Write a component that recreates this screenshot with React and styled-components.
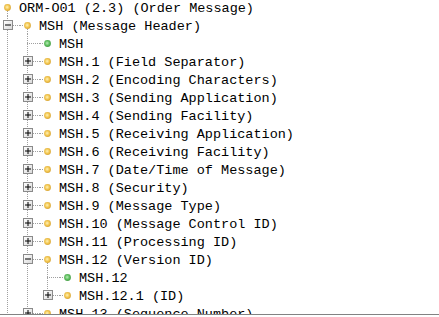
import React from 'react';
import styled, { createGlobalStyle } from 'styled-components';

const GlobalStyle = createGlobalStyle`
    html, body {
        margin: 0;
        padding: 0;
        background: #fff;
    }
`;

const DOT = '#a0a0a0';
const vLine = (h) =>
    `repeating-linear-gradient(to bottom, ${DOT} 0 1px, transparent 1px 2px) 7px 0 / 1px ${h} no-repeat`;
const hLine = (from, w) =>
    `repeating-linear-gradient(to right, ${DOT} 0 1px, transparent 1px 2px) ${from}px 9px / ${w}px 1px no-repeat`;

const Viewport = styled.div`
    width: 439px;
    height: 314px;
    overflow: hidden;
    border-bottom: 1px solid #828282;
    background: #fff;
`;

const TreeList = styled.div`
    margin-top: -2px;
    display: flex;
    flex-direction: column;
`;

const Row = styled.div`
    display: flex;
    height: 18px;
    white-space: nowrap;
`;

const GuideCell = styled.div`
    width: 20px;
    flex-shrink: 0;
    background: ${(p) => (p.$line ? vLine('100%') : 'none')};
`;

const ConnectorCell = styled.div`
    width: 20px;
    flex-shrink: 0;
    display: flex;
    align-items: flex-start;
    padding: 4px 0 0 3px;
    box-sizing: border-box;
    background: ${(p) => `${hLine(7, 13)}, ${vLine(p.$last ? '10px' : '100%')}`};
`;

const DotCell = styled.div`
    width: 19px;
    flex-shrink: 0;
    display: flex;
    align-items: flex-start;
    padding: 6px 0 0 4px;
    box-sizing: border-box;
    background: ${(p) => {
        const parts = [];
        if (p.$connected) parts.push(hLine(0, 4));
        if (p.$open) parts.push(`repeating-linear-gradient(to bottom, ${DOT} 0 1px, transparent 1px 2px) 7px 13px / 1px 5px no-repeat`);
        return parts.length ? parts.join(', ') : 'none';
    }};
`;

const Label = styled.span`
    margin-top: 2px;
    font-family: "Liberation Mono", "Courier New", monospace;
    font-size: 13.5px;
    line-height: 18px;
    color: #000;
`;

function ExpandBox({ open }) {
    return (
        <svg width="10" height="10" viewBox="0 0 10 10">
            <defs>
                <linearGradient id="boxfill" x1="0" y1="0" x2="1" y2="1">
                    <stop offset="0" stopColor="#ffffff" />
                    <stop offset="1" stopColor="#d8d8d8" />
                </linearGradient>
            </defs>
            <rect x="0.5" y="0.5" width="9" height="9" fill="url(#boxfill)" stroke="#8a8a8a" />
            <rect x="2" y="4.5" width="6" height="1" fill="#000" />
            {!open && <rect x="4.5" y="2" width="1" height="6" fill="#000" />}
        </svg>
    );
}

function Bullet({ kind }) {
    const yellow = kind !== 'value';
    const id = yellow ? 'dotY' : 'dotG';
    return (
        <svg width="7" height="7" viewBox="0 0 7 7">
            <defs>
                <radialGradient id={id} cx="0.45" cy="0.45" r="0.6">
                    <stop offset="0" stopColor={yellow ? '#fff2b8' : '#b8ecb8'} />
                    <stop offset="0.55" stopColor={yellow ? '#f2c650' : '#5fbf5f'} />
                    <stop offset="1" stopColor={yellow ? '#d4a030' : '#449a44'} />
                </radialGradient>
            </defs>
            <circle cx="3.5" cy="3.5" r="3.4" fill={`url(#${id})`} />
        </svg>
    );
}

const field = (label, extra = {}) => ({ label, children: [{ label: 'x' }], ...extra });

const tree = {
    label: 'ORM-O01 (2.3) (Order Message)',
    open: true,
    children: [
        {
            label: 'MSH (Message Header)',
            open: true,
            children: [
                { label: 'MSH', kind: 'value' },
                field('MSH.1 (Field Separator)'),
                field('MSH.2 (Encoding Characters)'),
                field('MSH.3 (Sending Application)'),
                field('MSH.4 (Sending Facility)'),
                field('MSH.5 (Receiving Application)'),
                field('MSH.6 (Receiving Facility)'),
                field('MSH.7 (Date/Time of Message)'),
                field('MSH.8 (Security)'),
                field('MSH.9 (Message Type)'),
                field('MSH.10 (Message Control ID)'),
                field('MSH.11 (Processing ID)'),
                {
                    label: 'MSH.12 (Version ID)',
                    open: true,
                    children: [
                        { label: 'MSH.12', kind: 'value' },
                        field('MSH.12.1 (ID)'),
                    ],
                },
                field('MSH.13 (Sequence Number)'),
                field('MSH.14 (Continuation Pointer)'),
            ],
        },
        field('ORC (Common Order)'),
    ],
};

function flatten(node, level, guides, isLast, out) {
    out.push({ node, level, guides, isLast });
    if (node.open && node.children) {
        const next = level === 0 ? [] : [...guides, !isLast];
        node.children.forEach((c, i) =>
            flatten(c, level + 1, next, i === node.children.length - 1, out)
        );
    }
    return out;
}

function TreeRow({ row }) {
    const { node, level, guides, isLast } = row;
    const hasKids = !!node.children;
    return (
        <Row>
            {guides.map((g, i) => (
                <GuideCell key={i} $line={g} />
            ))}
            {level > 0 && (
                <ConnectorCell $last={isLast}>
                    {hasKids && <ExpandBox open={node.open} />}
                </ConnectorCell>
            )}
            <DotCell $connected={level > 0} $open={node.open}>
                <Bullet kind={node.kind} />
            </DotCell>
            <Label>{node.label}</Label>
        </Row>
    );
}

export default function App() {
    const rows = flatten(tree, 0, [], true, []);
    return (
        <>
            <GlobalStyle />
            <Viewport>
                <TreeList>
                    {rows.map((r, i) => (
                        <TreeRow key={i} row={r} />
                    ))}
                </TreeList>
            </Viewport>
        </>
    );
}
